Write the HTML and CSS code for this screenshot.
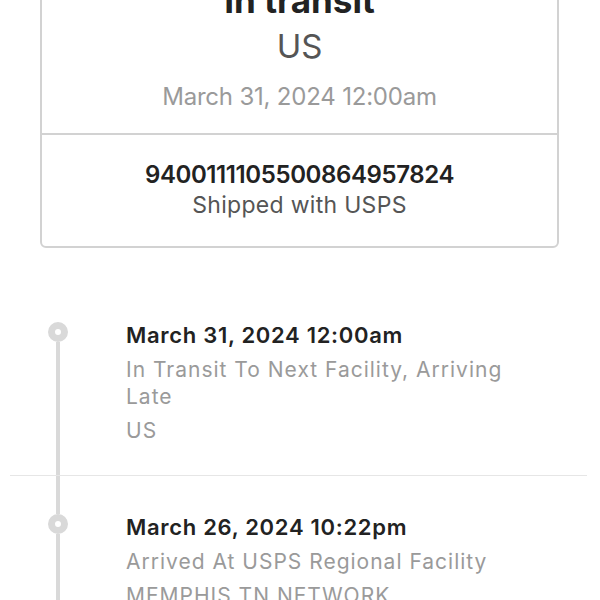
FILE: index.html
```html
<!DOCTYPE html>
<html lang="en">
<head>
<meta charset="utf-8">
<title>Tracking</title>
<link rel="stylesheet" href="styles.css">
</head>
<body>
<main class="page">
  <section class="card">
    <div class="card-status">
      <h1 class="status-title">In transit</h1>
      <div class="status-place">US</div>
      <div class="status-date">March 31, 2024 12:00am</div>
    </div>
    <div class="card-tracking">
      <div class="tracking-number">9400111105500864957824</div>
      <div class="tracking-carrier">Shipped with USPS</div>
    </div>
  </section>

  <ol class="timeline">
    <li class="event event-first">
      <div class="rail">
        <span class="rail-top"></span>
        <span class="dot"></span>
        <span class="rail-line"></span>
      </div>
      <div class="event-body">
        <div class="event-time">March 31, 2024 12:00am</div>
        <div class="event-desc">In Transit To Next Facility, Arriving Late</div>
        <div class="event-place">US</div>
      </div>
    </li>
    <li class="event">
      <div class="rail">
        <span class="rail-top"></span>
        <span class="dot"></span>
        <span class="rail-line"></span>
      </div>
      <div class="event-body">
        <div class="event-time">March 26, 2024 10:22pm</div>
        <div class="event-desc">Arrived At USPS Regional Facility</div>
        <div class="event-place">MEMPHIS TN NETWORK DISTRIBUTION CENTER</div>
      </div>
    </li>
  </ol>
</main>
</body>
</html>
```

FILE: styles.css
```css
* { box-sizing: border-box; }

html, body {
  margin: 0;
  padding: 0;
  background: #ffffff;
}

body {
  font-family: Inter, "Liberation Sans", sans-serif;
  color: #222222;
  overflow: hidden;
}

.page {
  margin-top: -42px;
}

.card {
  margin: 0 41px 0 40px;
  border: 2px solid #d2d2d2;
  border-radius: 6px;
}

.card-status {
  padding: 20px 10px 20px;
  text-align: center;
}

.status-title {
  margin: 0 0 6px;
  font-size: 35px;
  line-height: 40px;
  font-weight: 700;
  color: #222222;
}

.status-place {
  font-size: 33px;
  line-height: 40px;
  color: #555555;
}

.status-date {
  margin-top: 15px;
  font-size: 24px;
  line-height: 32px;
  letter-spacing: -0.2px;
  color: #9a9a9a;
}

.card-tracking {
  border-top: 2px solid #d2d2d2;
  padding: 25px 10px 27px;
  text-align: center;
}

.tracking-number {
  font-size: 24px;
  line-height: 30px;
  font-weight: 600;
  letter-spacing: -0.4px;
  color: #222222;
}

.tracking-carrier {
  margin-top: 1px;
  font-size: 23px;
  line-height: 28px;
  letter-spacing: 0.3px;
  color: #555555;
}

.timeline {
  list-style: none;
  margin: 36px 13px 0 10px;
  padding: 0;
}

.event {
  display: grid;
  grid-template-columns: 96px 1fr;
  column-gap: 20px;
  border-bottom: 1px solid #e6e6e6;
}

.rail {
  display: flex;
  flex-direction: column;
  align-items: center;
}

.rail-top {
  display: block;
  width: 4px;
  height: 38px;
  background: #d9d9d9;
}

.event-first .rail-top {
  background: transparent;
}

.dot {
  display: block;
  width: 20px;
  height: 20px;
  border-radius: 50%;
  border: 7px solid #d9d9d9;
  background: #ffffff;
}

.rail-line {
  display: block;
  width: 4px;
  flex: 1;
  background: #d9d9d9;
}

.event-body {
  padding: 37px 50px 31px 0;
}

.event-time {
  font-size: 22px;
  line-height: 28px;
  font-weight: 600;
  letter-spacing: 0.7px;
  color: #222222;
}

.event-desc {
  margin-top: 7px;
  font-size: 21px;
  line-height: 27px;
  letter-spacing: 1px;
  color: #9a9a9a;
}

.event-place {
  margin-top: 7px;
  font-size: 21px;
  line-height: 27px;
  letter-spacing: 1px;
  color: #9a9a9a;
}
```
